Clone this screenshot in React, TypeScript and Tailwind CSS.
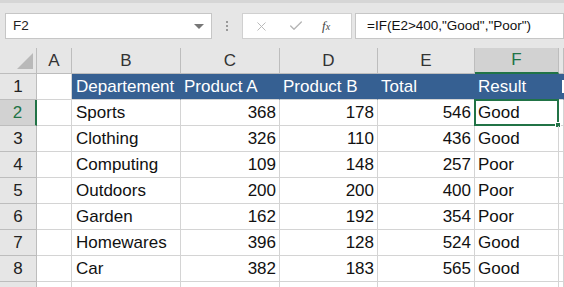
import { X, Check } from 'lucide-react';

type Row = { dept: string; a: number; b: number; total: number; result: string };

const rows: Row[] = [
  { dept: 'Sports', a: 368, b: 178, total: 546, result: 'Good' },
  { dept: 'Clothing', a: 326, b: 110, total: 436, result: 'Good' },
  { dept: 'Computing', a: 109, b: 148, total: 257, result: 'Poor' },
  { dept: 'Outdoors', a: 200, b: 200, total: 400, result: 'Poor' },
  { dept: 'Garden', a: 162, b: 192, total: 354, result: 'Poor' },
  { dept: 'Homewares', a: 396, b: 128, total: 524, result: 'Good' },
  { dept: 'Car', a: 382, b: 183, total: 565, result: 'Good' },
];

const cols = 'grid grid-cols-[37px_35px_109px_99px_98px_97px_84px_1fr]';
const cell = 'h-[26px] border-r border-b border-[#d4d4d4] flex items-center';
const rowHead = 'h-[26px] border-r border-b border-[#bdbdbd] bg-[#e6e6e6] flex items-center justify-center text-[#222]';
const blue = 'h-[26px] bg-[#366092] border-r border-r-[#366092] border-b border-b-[#d4d4d4] text-white flex items-center pl-[3px]';

function ColHeader({ label, active }: { label: string; active?: boolean }) {
  return (
    <div
      className={
        active
          ? 'h-[26px] border-r border-[#bdbdbd] border-b-2 border-b-[#217346] bg-[#d2d2d2] flex items-center justify-center text-[#217346]'
          : 'h-[26px] border-r border-b border-[#bdbdbd] bg-[#e6e6e6] flex items-center justify-center text-[#333]'
      }
    >
      {label}
    </div>
  );
}

export default function App() {
  return (
    <div className="w-[564px] h-[287px] overflow-hidden bg-white font-['Liberation_Sans',Arial,sans-serif]">
      {/* formula bar */}
      <div className="h-[48px] bg-[#e6e6e6] border-t-[3px] border-[#d6d6d6] flex items-start pt-[10px] pl-[5px] text-[13.5px]">
        <div className="w-[207px] h-[26px] bg-white border border-[#c6c6c6] flex items-center justify-between pl-[7px] pr-[7px] text-[#222]">
          <span>F2</span>
          <span className="w-0 h-0 border-l-[5px] border-r-[5px] border-t-[5px] border-l-transparent border-r-transparent border-t-[#777]" />
        </div>
        <div className="w-[30px] h-[26px] flex flex-col items-center justify-center gap-[2px]">
          <span className="w-[2px] h-[2px] bg-[#999]" />
          <span className="w-[2px] h-[2px] bg-[#999]" />
          <span className="w-[2px] h-[2px] bg-[#999]" />
        </div>
        <div className="w-[110px] h-[26px] bg-white border border-[#d0d0d0] flex items-center">
          <X size={15} strokeWidth={1.5} className="text-[#b5b5b5] ml-[11px]" />
          <Check size={16} strokeWidth={2} className="text-[#b5b5b5] ml-[19px]" />
          <span className="ml-[18px] text-[#444] italic font-['Liberation_Serif',serif] text-[13px]">
            f<span className="text-[10px]">x</span>
          </span>
        </div>
        <div className="flex-1 ml-[3px] h-[26px] bg-white border border-[#c6c6c6] flex items-center pl-[11px] text-[#111]">
          =IF(E2&gt;400,"Good","Poor")
        </div>
      </div>

      {/* sheet */}
      <div className={`${cols} text-[17px] text-[#111]`}>
        <div className="h-[26px] border-r border-b border-[#bdbdbd] bg-[#e6e6e6] flex items-end justify-end pr-[3px] pb-[4px]">
          <svg width="16" height="16" viewBox="0 0 16 16">
            <path d="M16 0 L16 16 L0 16 Z" fill="#b9b9b9" />
          </svg>
        </div>
        <ColHeader label="A" />
        <ColHeader label="B" />
        <ColHeader label="C" />
        <ColHeader label="D" />
        <ColHeader label="E" />
        <ColHeader label="F" active />
        <ColHeader label="" />

        {/* row 1 */}
        <div className={rowHead}>1</div>
        <div className={cell} />
        <div className={`${blue} pl-[4px]`}>Departement</div>
        <div className={blue}>Product A</div>
        <div className={blue}>Product B</div>
        <div className={blue}>Total</div>
        <div className={blue}>Result</div>
        <div className={`${blue} relative`}>
          <span className="absolute left-[3px] top-[6px] w-[3px] h-[13px] bg-white" />
        </div>

        {rows.map((r, i) => {
          const sel = i === 0;
          return (
            <div key={r.dept} className="contents">
              <div
                className={
                  sel
                    ? 'h-[26px] border-r-2 border-r-[#217346] border-b border-[#bdbdbd] bg-[#d2d2d2] flex items-center justify-center text-[#217346]'
                    : rowHead
                }
              >
                {i + 2}
              </div>
              <div className={cell} />
              <div className={`${cell} pl-[4px]`}>{r.dept}</div>
              <div className={`${cell} justify-end pr-[3px]`}>{r.a}</div>
              <div className={`${cell} justify-end pr-[3px]`}>{r.b}</div>
              <div className={`${cell} justify-end pr-[3px]`}>{r.total}</div>
              <div className={`${cell} pl-[3px] relative`}>
                {r.result}
                {sel && (
                  <>
                    <span className="absolute -left-[1px] -top-[1px] -right-[1px] -bottom-[1px] border-2 border-[#217346]" />
                    <span className="absolute -right-[3px] -bottom-[3px] w-[6px] h-[6px] bg-[#217346] border border-white" />
                  </>
                )}
              </div>
              <div className={cell} />
            </div>
          );
        })}

        {/* row 9 partial */}
        <div className={rowHead} />
        <div className={cell} />
        <div className={cell} />
        <div className={cell} />
        <div className={cell} />
        <div className={cell} />
        <div className={cell} />
        <div className={cell} />
      </div>
    </div>
  );
}
